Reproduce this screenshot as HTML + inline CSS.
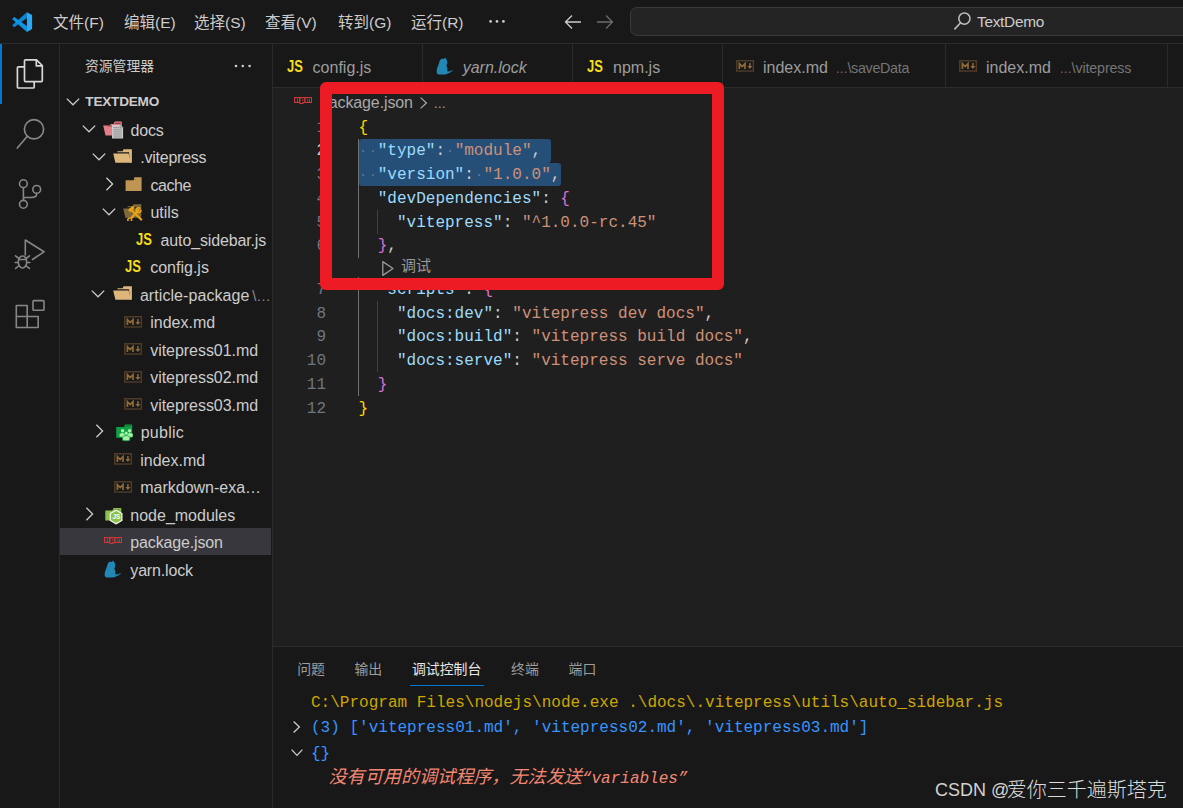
<!DOCTYPE html>
<html lang="zh-CN">
<head>
<meta charset="utf-8">
<title>TextDemo</title>
<style>
*{box-sizing:border-box;margin:0;padding:0}
html,body{width:1183px;height:808px;overflow:hidden;background:#181818}
body{position:relative;font-family:"Liberation Sans","Noto Sans CJK SC",sans-serif;color:#ccc;font-size:16px}
.abs{position:absolute}
#title{left:0;top:0;width:1183px;height:44px;background:#181818;border-bottom:1px solid #2b2b2b}
#title .m{position:absolute;top:1.3px;height:43px;line-height:43px;font-size:15.5px;color:#ccc;white-space:nowrap}
#search{left:630px;top:7px;width:600px;height:29px;border:1px solid #3a3a3a;border-radius:7px;background:#242424}
#act{left:0;top:44px;width:60px;height:764px;background:#181818;border-right:1px solid #2b2b2b}
#side{left:60px;top:44px;width:213px;height:764px;background:#181818;border-right:1px solid #2b2b2b}
#tabs{left:273px;top:44px;width:910px;height:44px;background:#181818;border-bottom:1px solid #2b2b2b}
.tab{position:absolute;top:0;height:43px;border-right:1px solid #2b2b2b;line-height:43px;font-size:16px;color:#9d9d9d;white-space:nowrap}
#editor{left:273px;top:88px;width:910px;height:558px;background:#1f1f1f}
#panel{left:273px;top:646px;width:910px;height:162px;background:#181818;border-top:1px solid #2b2b2b}
.row{position:absolute;left:0;width:211px;height:27.5px;line-height:27px;font-size:16px;color:#ccc;white-space:nowrap}
.row .t{position:absolute;top:1.3px}
.code{position:absolute;left:85.5px;height:23.75px;line-height:23.75px;font-family:"Liberation Mono",monospace;font-size:16.03px;white-space:pre;color:#ccc}
.ln{position:absolute;left:0;width:53px;text-align:right;height:23.75px;line-height:23.75px;font-family:"Liberation Mono",monospace;font-size:16.03px;color:#6e7681}
.k{color:#9cdcfe}.s{color:#ce9178}.y{color:#ffd700}.p{color:#da70d6}
.tl{top:1.5px;height:43px;line-height:43px}
.pt{top:8px;height:28px;line-height:28px;font-size:13.9px;white-space:nowrap}
.con{position:absolute;height:24px;line-height:24px;font-family:"Liberation Mono",monospace;font-size:16.03px;white-space:pre}
.cj{font-size:18.1px}
</style>
</head>
<body>
<div id="title" class="abs">
<svg class="abs" style="left:11.8px;top:11.9px" width="21" height="21" viewBox="0 0 21 21"><path d="M14.9 0.25 V5.9 L2.25 15.2 L0.15 13.3 Z" fill="#0b87d6"/><path d="M14.9 20 V14.1 L2.25 5.1 L0.15 6.9 Z" fill="#0e95e8"/><path d="M14.9 0.25 L20.1 3 V17.1 L14.9 20 Z" fill="#2aaaf6"/></svg>
<span class="m" style="left:53px">文件(F)</span>
<span class="m" style="left:124px">编辑(E)</span>
<span class="m" style="left:194px">选择(S)</span>
<span class="m" style="left:265px">查看(V)</span>
<span class="m" style="left:338px">转到(G)</span>
<span class="m" style="left:411px">运行(R)</span>
<svg class="abs" style="left:486px;top:17.5px" width="22" height="6" viewBox="0 0 22 6"><circle cx="4.6" cy="3.4" r="1.35" fill="#ccc"/><circle cx="11" cy="3.4" r="1.35" fill="#ccc"/><circle cx="17.4" cy="3.4" r="1.35" fill="#ccc"/></svg>
<svg class="abs" style="left:562.6px;top:12.5px" width="20" height="18" viewBox="0 0 20 18"><path d="M18 9 H2.5 M9 2.5 L2.5 9 L9 15.5" fill="none" stroke="#ccc" stroke-width="1.3"/></svg>
<svg class="abs" style="left:594.6px;top:12.5px" width="20" height="18" viewBox="0 0 20 18"><path d="M2 9 H17.5 M11 2.5 L17.5 9 L11 15.5" fill="none" stroke="#6b6b6b" stroke-width="1.3"/></svg>
<div id="search" class="abs"></div>
<svg class="abs" style="left:953px;top:12px" width="19" height="19" viewBox="0 0 19 19"><circle cx="11.4" cy="6.6" r="5.6" fill="none" stroke="#bdbdbd" stroke-width="1.5"/><path d="M7.6 10.7 L1.4 17.4" stroke="#bdbdbd" stroke-width="1.6" fill="none"/></svg>
<span class="m" style="left:977px;font-size:15.4px;top:-0.3px;letter-spacing:-0.28px">TextDemo</span>
</div>
<div id="act" class="abs">
<div class="abs" style="left:0;top:0;width:2px;height:60px;background:#0078d4"></div>
<svg class="abs" style="left:0;top:0" width="60" height="300" viewBox="0 44 60 300" fill="none" stroke-linejoin="round" stroke-linecap="round">
<!-- files -->
<g stroke="#d7d7d7" stroke-width="1.7">
<path d="M25.5 59.8 H36.5 L42.3 65.6 V80.6 Q42.3 81.6 41.3 81.6 H25.5 Q24.5 81.6 24.5 80.6 V60.8 Q24.5 59.8 25.5 59.8 Z"/>
<path d="M36.3 60 V65.8 H42.2"/>
<path d="M24.3 66.8 H18.4 Q17.4 66.8 17.4 67.8 V87 Q17.4 88 18.4 88 H33.2 Q34.2 88 34.2 87 V81.8"/>
</g>
<!-- search -->
<g stroke="#868686" stroke-width="1.7">
<circle cx="34" cy="129.3" r="9.6"/>
<path d="M27.3 136.3 L17.3 148"/>
</g>
<!-- scm -->
<g stroke="#868686" stroke-width="1.6">
<circle cx="23.4" cy="183.7" r="3.9"/>
<circle cx="23.4" cy="204.3" r="3.9"/>
<circle cx="36.7" cy="189.4" r="3.9"/>
<path d="M23.4 187.8 V200.2 M36.7 193.4 Q36.7 197.5 31 197.5 H25 Q23.4 197.5 23.4 199"/>
</g>
<!-- debug -->
<g stroke="#868686" stroke-width="1.6">
<path d="M25.3 255 V240 L44 251.8 L32.5 259.5"/>
<ellipse cx="22.5" cy="262" rx="4.2" ry="6"/>
<path d="M18.6 259.5 H26.4 M18.3 258 L15.5 255.8 M26.7 258 L29.5 255.8 M18.3 262.5 H15.2 M26.7 262.5 H29.8 M18.6 266 L15.6 268.4 M26.4 266 L29.4 268.4"/>
</g>
<!-- extensions -->
<g stroke="#868686" stroke-width="1.6">
<path d="M16.3 305.5 H27.2 V327.5 H16.3 Z M16.3 316.5 H38.2 V327.5 H27.2 M27.2 316.5"/>
<rect x="33" y="300.6" width="11" height="9.6" rx="0.8"/>
</g>
</svg>
</div>
<div id="side" class="abs">
<span class="abs" style="left:25px;top:1px;height:43.75px;line-height:43px;font-size:13.8px;color:#ccc">资源管理器</span>
<svg class="abs" style="left:174px;top:19px" width="18" height="6" viewBox="0 0 18 6"><circle cx="2" cy="3" r="1.3" fill="#ccc"/><circle cx="8.8" cy="3" r="1.3" fill="#ccc"/><circle cx="15.6" cy="3" r="1.3" fill="#ccc"/></svg>
<div class="row" style="top:43.75px"><svg class="abs" style="left:5px;top:8px" width="16" height="12" viewBox="0 0 16 12"><path d="M1.8 2.6 L8 8.8 L14.2 2.6" fill="none" stroke="#ccc" stroke-width="1.3"/></svg><span class="t" id="hd" style="left:25.3px;top:0.6px;font-weight:bold;font-size:13.6px;letter-spacing:-0.22px">TEXTDEMO</span></div>
<div class="row" style="top:71.25px"><svg class="abs" style="left:21.0px;top:8px" width="16" height="12" viewBox="0 0 16 12"><path d="M1.8 2.6 L8 8.8 L14.2 2.6" fill="none" stroke="#ccc" stroke-width="1.3"/></svg><svg class="abs" style="left:43.0px;top:6.2px" width="22" height="20" viewBox="0 0 22 20"><path d="M11.8 0.5 H18.3 Q18.8 0.5 18.8 1 V6 H7.5 V3 H10.6 Z" fill="#e37f86"/><path d="M12.4 1.7 H17.6 V2.9 H11.6 Z" fill="#8a3f47"/><path d="M0.2 4.6 H10 V14.4 H2.5 Z" fill="#e37f86"/><path d="M4.2 4.6 H10 V5.6 H4.4 Z" fill="#9c4a52"/><path d="M9 3.9 H17.6 L20.1 6.4 V17.4 H9 Z" fill="#cbcbcb"/><path d="M17.3 4.2 V6.7 H19.8" fill="none" stroke="#8c8c8c" stroke-width="0.8"/><path d="M10.3 6.4 H16.3 M10.3 8.3 H18.8 M10.3 10.2 H18.8 M10.3 12.1 H18.8 M10.3 14 H18.8 M10.3 15.9 H18.8" stroke="#8f8f8f" stroke-width="0.9"/></svg><span class="t" id="r0" style="left:70.5px;letter-spacing:-0.150px">docs</span></div>
<div class="row" style="top:98.75px"><svg class="abs" style="left:30.7px;top:8px" width="16" height="12" viewBox="0 0 16 12"><path d="M1.8 2.6 L8 8.8 L14.2 2.6" fill="none" stroke="#ccc" stroke-width="1.3"/></svg><svg class="abs" style="left:53.2px;top:5.1px" width="20" height="16" viewBox="0 0 20 16"><path d="M10.5 1.2 H18.9 V14.8 H17 L16 4.3 H4.5 V3.2 H9.7 Z" fill="#dcb67a"/><path d="M0.2 5.6 H15.6 L18 14.8 H2.4 Z" fill="#dcb67a"/></svg><span class="t" id="r1" style="left:80.2px;letter-spacing:-0.230px">.vitepress</span></div>
<div class="row" style="top:126.25px"><svg class="abs" style="left:43.6px;top:5.7px" width="12" height="16" viewBox="0 0 12 16"><path d="M2.4 1.8 L8.6 8 L2.4 14.2" fill="none" stroke="#ccc" stroke-width="1.3"/></svg><svg class="abs" style="left:65.2px;top:5.7px" width="18" height="16" viewBox="0 0 18 16"><path d="M9.3 1.2 H16.6 V3.9 H10.2 V3 H9 Z" fill="#c09553"/><path d="M9.8 1.8 H16 V3.2 H9.8Z" fill="#181818" opacity="0.0"/><path d="M0.6 4.2 H8.6 L9.6 2.4 H10.4 V3.9 H16.6 V14.9 H0.6 Z" fill="#c09553"/></svg><span class="t" id="r2" style="left:90.4px;letter-spacing:-0.400px">cache</span></div>
<div class="row" style="top:153.75px"><svg class="abs" style="left:40.9px;top:8px" width="16" height="12" viewBox="0 0 16 12"><path d="M1.8 2.6 L8 8.8 L14.2 2.6" fill="none" stroke="#ccc" stroke-width="1.3"/></svg><svg class="abs" style="left:63.2px;top:5.2px" width="21" height="18" viewBox="0 0 21 18"><path d="M10.5 1.2 H18.3 V13.5 H16.8 L16 4.3 H4.5 V3.2 H9.7 Z" fill="#7d693c"/><path d="M0.2 5.6 H15.6 L18 14.8 H2.4 Z" fill="#7d693c"/><g stroke="#e8a317" stroke-linecap="round" fill="none"><path d="M8.3 7 L18.2 16.5" stroke-width="2.2"/><path d="M15.8 6.8 L8.2 15.3" stroke-width="2.2"/><path d="M7 7.2 L9.8 4.8" stroke-width="3.2"/><path d="M16.9 5.2 A2.4 2.4 0 1 0 17.9 7.6" stroke-width="1.7"/><path d="M6.6 15 A1.9 1.9 0 1 0 8.6 16.8" stroke-width="1.6"/></g></svg><span class="t" id="r3" style="left:90.4px;letter-spacing:0.000px">utils</span></div>
<div class="row" style="top:181.25px"><svg class="abs" style="left:75.7px;top:7.3px" width="17" height="14" viewBox="0 0 17 14"><text x="0" y="12" font-family="Liberation Sans,sans-serif" font-weight="bold" font-size="15.7" fill="#f5de19" textLength="15.9" lengthAdjust="spacingAndGlyphs">JS</text></svg><span class="t" id="r4" style="left:100.6px;letter-spacing:-0.150px">auto_sidebar.js</span></div>
<div class="row" style="top:208.75px"><svg class="abs" style="left:65.3px;top:7.3px" width="17" height="14" viewBox="0 0 17 14"><text x="0" y="12" font-family="Liberation Sans,sans-serif" font-weight="bold" font-size="15.7" fill="#f5de19" textLength="15.9" lengthAdjust="spacingAndGlyphs">JS</text></svg><span class="t" id="r5" style="left:90.2px;letter-spacing:0.000px">config.js</span></div>
<div class="row" style="top:236.25px"><svg class="abs" style="left:30.4px;top:8px" width="16" height="12" viewBox="0 0 16 12"><path d="M1.8 2.6 L8 8.8 L14.2 2.6" fill="none" stroke="#ccc" stroke-width="1.3"/></svg><svg class="abs" style="left:52.9px;top:5.1px" width="20" height="16" viewBox="0 0 20 16"><path d="M10.5 1.2 H18.9 V14.8 H17 L16 4.3 H4.5 V3.2 H9.7 Z" fill="#dcb67a"/><path d="M0.2 5.6 H15.6 L18 14.8 H2.4 Z" fill="#dcb67a"/></svg><span class="t" id="r6" style="left:79.9px"><span id="r6a" style="letter-spacing:0.070px">article-package</span><span style="color:#8c8c8c;font-size:14.5px;margin-left:-1.2px"> \…</span></span></div>
<div class="row" style="top:263.75px"><svg class="abs" style="left:63.8px;top:7.9px" width="20" height="14" viewBox="0 0 20 14"><rect x="0.75" y="0.75" width="16.6" height="10.3" fill="none" stroke="#4d3b27" stroke-width="1.5"/><path d="M3.4 9 V3.6 L6.2 6.6 L9 3.6 V9" fill="none" stroke="#8f6a38" stroke-width="1.7"/><path d="M13.9 3 V7" fill="none" stroke="#8f6a38" stroke-width="1.5"/><path d="M11.3 5.9 H16.5 L13.9 9.1 Z" fill="#8f6a38"/></svg><span class="t" id="r7" style="left:90.2px;letter-spacing:0.000px">index.md</span></div>
<div class="row" style="top:291.25px"><svg class="abs" style="left:63.8px;top:7.9px" width="20" height="14" viewBox="0 0 20 14"><rect x="0.75" y="0.75" width="16.6" height="10.3" fill="none" stroke="#4d3b27" stroke-width="1.5"/><path d="M3.4 9 V3.6 L6.2 6.6 L9 3.6 V9" fill="none" stroke="#8f6a38" stroke-width="1.7"/><path d="M13.9 3 V7" fill="none" stroke="#8f6a38" stroke-width="1.5"/><path d="M11.3 5.9 H16.5 L13.9 9.1 Z" fill="#8f6a38"/></svg><span class="t" id="r8" style="left:90.2px;letter-spacing:-0.040px">vitepress01.md</span></div>
<div class="row" style="top:318.75px"><svg class="abs" style="left:63.8px;top:7.9px" width="20" height="14" viewBox="0 0 20 14"><rect x="0.75" y="0.75" width="16.6" height="10.3" fill="none" stroke="#4d3b27" stroke-width="1.5"/><path d="M3.4 9 V3.6 L6.2 6.6 L9 3.6 V9" fill="none" stroke="#8f6a38" stroke-width="1.7"/><path d="M13.9 3 V7" fill="none" stroke="#8f6a38" stroke-width="1.5"/><path d="M11.3 5.9 H16.5 L13.9 9.1 Z" fill="#8f6a38"/></svg><span class="t" id="r9" style="left:90.2px;letter-spacing:-0.040px">vitepress02.md</span></div>
<div class="row" style="top:346.25px"><svg class="abs" style="left:63.8px;top:7.9px" width="20" height="14" viewBox="0 0 20 14"><rect x="0.75" y="0.75" width="16.6" height="10.3" fill="none" stroke="#4d3b27" stroke-width="1.5"/><path d="M3.4 9 V3.6 L6.2 6.6 L9 3.6 V9" fill="none" stroke="#8f6a38" stroke-width="1.7"/><path d="M13.9 3 V7" fill="none" stroke="#8f6a38" stroke-width="1.5"/><path d="M11.3 5.9 H16.5 L13.9 9.1 Z" fill="#8f6a38"/></svg><span class="t" id="r10" style="left:90.2px;letter-spacing:-0.040px">vitepress03.md</span></div>
<div class="row" style="top:373.75px"><svg class="abs" style="left:33.9px;top:5.7px" width="12" height="16" viewBox="0 0 12 16"><path d="M2.4 1.8 L8.6 8 L2.4 14.2" fill="none" stroke="#ccc" stroke-width="1.3"/></svg><svg class="abs" style="left:55.9px;top:6.2px" width="18" height="18" viewBox="0 0 18 18"><path d="M9 0.4 H15.6 Q16.2 0.4 16.2 1 V13.8 H0.2 V3 H8 Z" fill="#11a046"/><path d="M9.6 1.5 H15 V2.5 H8.9 Z" fill="#0a7a33"/><g fill="#a6f5a6"><circle cx="6.6" cy="6.8" r="1.7"/><circle cx="13.6" cy="6.8" r="1.7"/><path d="M3.6 12.8 V10.6 Q3.6 8.9 6.6 8.9 Q9 8.9 9 10.6 V12.8 Z"/><path d="M11 12.8 V10.6 Q11 8.9 13.6 8.9 Q16.8 8.9 16.8 10.6 V12.8 Z"/></g><g fill="#a6f5a6" stroke="#11a046" stroke-width="0.7"><circle cx="10.2" cy="9.3" r="2"/><path d="M6.6 16.2 V13.6 Q6.6 11.6 10.2 11.6 Q13.8 11.6 13.8 13.6 V16.2 Q10.2 17.4 6.6 16.2 Z"/></g></svg><span class="t" id="r11" style="left:80.7px;letter-spacing:0.250px">public</span></div>
<div class="row" style="top:401.25px"><svg class="abs" style="left:53.8px;top:7.9px" width="20" height="14" viewBox="0 0 20 14"><rect x="0.75" y="0.75" width="16.6" height="10.3" fill="none" stroke="#4d3b27" stroke-width="1.5"/><path d="M3.4 9 V3.6 L6.2 6.6 L9 3.6 V9" fill="none" stroke="#8f6a38" stroke-width="1.7"/><path d="M13.9 3 V7" fill="none" stroke="#8f6a38" stroke-width="1.5"/><path d="M11.3 5.9 H16.5 L13.9 9.1 Z" fill="#8f6a38"/></svg><span class="t" id="r12" style="left:80.2px;letter-spacing:0.000px">index.md</span></div>
<div class="row" style="top:428.75px"><svg class="abs" style="left:53.8px;top:7.9px" width="20" height="14" viewBox="0 0 20 14"><rect x="0.75" y="0.75" width="16.6" height="10.3" fill="none" stroke="#4d3b27" stroke-width="1.5"/><path d="M3.4 9 V3.6 L6.2 6.6 L9 3.6 V9" fill="none" stroke="#8f6a38" stroke-width="1.7"/><path d="M13.9 3 V7" fill="none" stroke="#8f6a38" stroke-width="1.5"/><path d="M11.3 5.9 H16.5 L13.9 9.1 Z" fill="#8f6a38"/></svg><span class="t" id="r13" style="left:80.2px;letter-spacing:0.000px">markdown-exa…</span></div>
<div class="row" style="top:456.25px"><svg class="abs" style="left:23.5px;top:5.7px" width="12" height="16" viewBox="0 0 12 16"><path d="M2.4 1.8 L8.6 8 L2.4 14.2" fill="none" stroke="#ccc" stroke-width="1.3"/></svg><svg class="abs" style="left:45.4px;top:6.4px" width="18" height="18" viewBox="0 0 18 18"><path d="M8.6 0.9 H15.8 Q16.3 0.9 16.3 1.4 V13.6 H0.3 V3.6 H7.4 Z" fill="#8bc34a"/><path d="M9.3 1.9 H15.3 V2.9 H8.5 Z" fill="#6a9a34"/><path d="M11.1 3.25 L16.95 6.6 V13.4 L11.1 16.75 L5.25 13.4 V6.6 Z" fill="#8bc34a" stroke="#fff" stroke-width="1.1"/><text x="7.5" y="12.4" font-family="Liberation Sans,sans-serif" font-weight="bold" font-size="6.4" fill="#fff">JS</text></svg><span class="t" id="r14" style="left:70.3px;letter-spacing:0.000px">node_modules</span></div>
<div class="row" style="top:483.75px;background:#37373d"><svg class="abs" style="left:43.9px;top:9.5px" width="19" height="8" viewBox="0 0 19 8"><path d="M0 0 H18 V6 H9.5 V7 H5.5 V6 H0 Z" fill="#cb3837"/><path d="M1.2 1.2 H5 V5 H4 V2.2 H3 V5 H1.2 Z M6.4 1.2 H10.2 V5 H8.4 V6 H6.4 Z M8.3 2.2 H9.2 V4 H8.3 Z M11.6 1.2 H17 V5 H16 V2.2 H15.1 V5 H14.2 V2.2 H13.4 V5 H11.6 Z" fill="#37373d" fill-rule="evenodd"/></svg><span class="t" id="r15" style="left:70.3px;letter-spacing:-0.150px">package.json</span></div>
<div class="row" style="top:511.25px"><svg class="abs" style="left:44.3px;top:5.0px" width="18" height="19" viewBox="0 0 18 19"><path d="M9 0.5 L10.8 3 Q11.6 5 11.3 6.5 L10.3 8.5 Q11.8 11 11.5 14.5 Q14 14.6 16.5 13 L16.8 13.5 Q14 16 12.5 16.3 Q11 17.6 8 17.4 H2.5 Q0.6 17 0.6 15 Q0.5 12 2 9 Q3 7 3.3 5 Q3.6 3 5.5 1.8 Q7 1.4 7.8 2 Z" fill="#2188b6"/></svg><span class="t" id="r16" style="left:70.3px;letter-spacing:-0.170px">yarn.lock</span></div>
</div>
<div id="tabs" class="abs">
<div class="tab" style="left:0px;width:150px"><svg class="abs" style="left:14.3px;top:15.6px" width="17" height="14" viewBox="0 0 17 14"><text x="0" y="12" font-family="Liberation Sans,sans-serif" font-weight="bold" font-size="15.7" fill="#f5de19" textLength="15.9" lengthAdjust="spacingAndGlyphs">JS</text></svg><span class="abs tl" id="t1" style="left:39.6px">config.js</span></div>
<div class="tab" style="left:150px;width:150px"><svg class="abs" style="left:13.0px;top:13.2px" width="18" height="19" viewBox="0 0 18 19"><path d="M9 0.5 L10.8 3 Q11.6 5 11.3 6.5 L10.3 8.5 Q11.8 11 11.5 14.5 Q14 14.6 16.5 13 L16.8 13.5 Q14 16 12.5 16.3 Q11 17.6 8 17.4 H2.5 Q0.6 17 0.6 15 Q0.5 12 2 9 Q3 7 3.3 5 Q3.6 3 5.5 1.8 Q7 1.4 7.8 2 Z" fill="#2188b6"/></svg><span class="abs tl" id="t2" style="left:39.7px;font-style:italic">yarn.lock</span></div>
<div class="tab" style="left:300px;width:150px"><svg class="abs" style="left:14.3px;top:15.6px" width="17" height="14" viewBox="0 0 17 14"><text x="0" y="12" font-family="Liberation Sans,sans-serif" font-weight="bold" font-size="15.7" fill="#f5de19" textLength="15.9" lengthAdjust="spacingAndGlyphs">JS</text></svg><span class="abs tl" id="t3" style="left:40px">npm.js</span></div>
<div class="tab" style="left:450px;width:223px"><svg class="abs" style="left:13.3px;top:15.8px" width="20" height="14" viewBox="0 0 20 14"><rect x="0.75" y="0.75" width="16.6" height="10.3" fill="none" stroke="#4d3b27" stroke-width="1.5"/><path d="M3.4 9 V3.6 L6.2 6.6 L9 3.6 V9" fill="none" stroke="#8f6a38" stroke-width="1.7"/><path d="M13.9 3 V7" fill="none" stroke="#8f6a38" stroke-width="1.5"/><path d="M11.3 5.9 H16.5 L13.9 9.1 Z" fill="#8f6a38"/></svg><span class="abs tl" id="t4" style="left:40px">index.md</span><span class="abs tl" id="t4b" style="left:112.4px;font-size:14.3px;letter-spacing:-0.3px;color:#757575;top:2.6px"><span style="font-size:12.3px">…</span>\saveData</span></div>
<div class="tab" style="left:673px;width:222px"><svg class="abs" style="left:13.3px;top:15.8px" width="20" height="14" viewBox="0 0 20 14"><rect x="0.75" y="0.75" width="16.6" height="10.3" fill="none" stroke="#4d3b27" stroke-width="1.5"/><path d="M3.4 9 V3.6 L6.2 6.6 L9 3.6 V9" fill="none" stroke="#8f6a38" stroke-width="1.7"/><path d="M13.9 3 V7" fill="none" stroke="#8f6a38" stroke-width="1.5"/><path d="M11.3 5.9 H16.5 L13.9 9.1 Z" fill="#8f6a38"/></svg><span class="abs tl" id="t5" style="left:40px">index.md</span><span class="abs tl" id="t5b" style="left:113.4px;font-size:14.3px;letter-spacing:-0.14px;color:#757575;top:2.6px"><span style="font-size:12.3px">…</span>\vitepress</span></div>
</div>
<div id="editor" class="abs">
<svg class="abs" style="left:21.1px;top:8.8px" width="19" height="8" viewBox="0 0 19 8"><path d="M0 0 H18 V6 H9.5 V7 H5.5 V6 H0 Z" fill="#cb3837"/><path d="M1.2 1.2 H5 V5 H4 V2.2 H3 V5 H1.2 Z M6.4 1.2 H10.2 V5 H8.4 V6 H6.4 Z M8.3 2.2 H9.2 V4 H8.3 Z M11.6 1.2 H17 V5 H16 V2.2 H15.1 V5 H14.2 V2.2 H13.4 V5 H11.6 Z" fill="#1f1f1f" fill-rule="evenodd"/></svg>
<span class="abs" id="bc" style="left:47px;top:1.3px;height:27px;line-height:27px;font-size:16px;letter-spacing:-0.12px;color:#a9a9a9;white-space:nowrap">package.json</span>
<svg class="abs" style="left:145.6px;top:8px" width="10" height="14" viewBox="0 0 10 14"><path d="M1.6 1.6 L7.4 7 L1.6 12.4" fill="none" stroke="#a9a9a9" stroke-width="1.2"/></svg>
<span class="abs" style="left:160.6px;top:3.4px;height:27px;line-height:26px;font-size:12.6px;color:#a9a9a9">…</span>
<div class="abs" style="left:86px;top:50.75px;width:192.1px;height:24.05px;background:#264f78;border-radius:3px 3px 3px 0"></div>
<div class="abs" style="left:86px;top:74.50px;width:201.7px;height:23.75px;background:#264f78;border-radius:0 3px 3px 3px"></div>
<div class="abs" style="left:89.3px;top:62.1px;width:2px;height:2px;background:#4d6f92"></div>
<div class="abs" style="left:98.9px;top:62.1px;width:2px;height:2px;background:#4d6f92"></div>
<div class="abs" style="left:175.9px;top:62.1px;width:2px;height:2px;background:#4d6f92"></div>
<div class="abs" style="left:89.3px;top:85.9px;width:2px;height:2px;background:#4d6f92"></div>
<div class="abs" style="left:98.9px;top:85.9px;width:2px;height:2px;background:#4d6f92"></div>
<div class="abs" style="left:204.8px;top:85.9px;width:2px;height:2px;background:#4d6f92"></div>
<div class="abs" style="left:85px;top:50.8px;width:1px;height:118.8px;background:#707070"></div>
<div class="abs" style="left:85px;top:189.2px;width:1px;height:118.8px;background:#707070"></div>
<div class="abs" style="left:104.0px;top:122.0px;width:1px;height:23.8px;background:#404040"></div>
<div class="abs" style="left:104.0px;top:213.0px;width:1px;height:71.2px;background:#404040"></div>
<div class="ln" style="top:28.65px;color:#6e7681">1</div>
<div class="code" id="c1" style="top:28.65px"><span class="y">{</span></div>
<div class="ln" style="top:52.40px;color:#ccc">2</div>
<div class="code" id="c2" style="top:52.40px">  <span class="k">"type"</span>: <span class="s">"module"</span>,</div>
<div class="ln" style="top:76.15px;color:#6e7681">3</div>
<div class="code" id="c3" style="top:76.15px">  <span class="k">"version"</span>: <span class="s">"1.0.0"</span>,</div>
<div class="ln" style="top:99.90px;color:#6e7681">4</div>
<div class="code" id="c4" style="top:99.90px">  <span class="k">"devDependencies"</span>: <span class="p">{</span></div>
<div class="ln" style="top:123.65px;color:#6e7681">5</div>
<div class="code" id="c5" style="top:123.65px">    <span class="k">"vitepress"</span>: <span class="s">"^1.0.0-rc.45"</span></div>
<div class="ln" style="top:147.40px;color:#6e7681">6</div>
<div class="code" id="c6" style="top:147.40px">  <span class="p">}</span>,</div>
<div class="ln" style="top:190.90px;color:#6e7681">7</div>
<div class="code" id="c7" style="top:190.90px">  <span class="k">"scripts"</span>: <span class="p">{</span></div>
<div class="ln" style="top:214.65px;color:#6e7681">8</div>
<div class="code" id="c8" style="top:214.65px">    <span class="k">"docs:dev"</span>: <span class="s">"vitepress dev docs"</span>,</div>
<div class="ln" style="top:238.40px;color:#6e7681">9</div>
<div class="code" id="c9" style="top:238.40px">    <span class="k">"docs:build"</span>: <span class="s">"vitepress build docs"</span>,</div>
<div class="ln" style="top:262.15px;color:#6e7681">10</div>
<div class="code" id="c10" style="top:262.15px">    <span class="k">"docs:serve"</span>: <span class="s">"vitepress serve docs"</span></div>
<div class="ln" style="top:285.90px;color:#6e7681">11</div>
<div class="code" id="c11" style="top:285.90px">  <span class="p">}</span></div>
<div class="ln" style="top:309.65px;color:#6e7681">12</div>
<div class="code" id="c12" style="top:309.65px"><span class="y">}</span></div>
<svg class="abs" style="left:108px;top:172px" width="14" height="17" viewBox="0 0 14 17"><path d="M1.8 1.6 L12 8.5 L1.8 15.4 Z" fill="none" stroke="#999" stroke-width="1.3" stroke-linejoin="round"/></svg>
<span class="abs" id="cl" style="left:128px;top:166.6px;height:22px;line-height:22px;font-size:15px;color:#999">调试</span>
</div>
<div id="panel" class="abs">
<span class="abs pt" style="left:24.2px;color:#9d9d9d">问题</span>
<span class="abs pt" style="left:81.4px;color:#9d9d9d">输出</span>
<span class="abs pt" style="left:138.9px;color:#e7e7e7">调试控制台</span>
<span class="abs pt" style="left:238.0px;color:#9d9d9d">终端</span>
<span class="abs pt" style="left:295.6px;color:#9d9d9d">端口</span>
<div class="abs" style="left:137px;top:38px;width:74px;height:1px;background:#0078d4"></div>
<div class="con" id="p1" style="top:44px;left:38px;color:#cca700">C:\Program Files\nodejs\node.exe .\docs\.vitepress\utils\auto_sidebar.js</div>
<svg class="abs" style="left:19px;top:73px" width="10" height="14" viewBox="0 0 10 14"><path d="M1.6 1.6 L7.4 7 L1.6 12.4" fill="none" stroke="#ccc" stroke-width="1.3"/></svg>
<div class="con" id="p2" style="top:68.5px;left:38px;color:#3794ff">(3) ['vitepress01.md', 'vitepress02.md', 'vitepress03.md']</div>
<svg class="abs" style="left:17px;top:101px" width="14" height="10" viewBox="0 0 14 10"><path d="M1.6 1.6 L7 7.4 L12.4 1.6" fill="none" stroke="#ccc" stroke-width="1.3"/></svg>
<div class="con" id="p3" style="top:95px;left:38px;color:#3794ff">{}</div>
<div class="con" id="p4" style="top:118.5px;left:55.5px;color:#f48771;font-style:italic;font-family:'Liberation Mono','Noto Sans CJK SC',monospace"><span class="cj">没有可用的调试程序，无法发送</span>“variables”</div>
</div>
<div id="redbox" class="abs" style="left:320px;top:82px;width:404px;height:208px;border:12px solid #ed1c24;border-radius:6px"></div>
<div class="abs" id="wm" style="left:935px;top:775px;height:28px;line-height:28px;font-size:18px;color:#d2d2d2;white-space:nowrap">CSDN @<span style="font-size:20px;font-weight:300;color:#dcdcdc;position:relative;top:1px;margin-left:-2.5px">爱你三千遍斯塔克</span></div>
</body>
</html>
